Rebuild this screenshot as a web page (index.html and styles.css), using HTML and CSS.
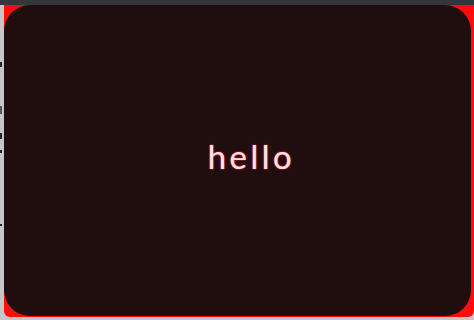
FILE: index.html
```html
<!DOCTYPE html>
<html>
<head>
<meta charset="utf-8">
<link rel="stylesheet" href="styles.css">
</head>
<body>
<div class="topbar"></div>
<div class="main">
  <div class="side">
    <i class="mark m1"></i>
    <i class="mark m2"></i>
    <i class="mark m3"></i>
    <i class="mark m4"></i>
    <i class="mark m5"></i>
  </div>
  <div class="frame">
    <div class="card">
      <span class="hello">hello</span>
    </div>
  </div>
</div>
</body>
</html>
```
FILE: styles.css
```css
html, body {
  margin: 0;
  padding: 0;
  width: 474px;
  height: 320px;
  overflow: hidden;
  background: #c6c6c8;
}
.topbar {
  height: 5px;
  background: #34363b;
}
.main {
  display: flex;
  height: 312px;
}
.side {
  width: 4px;
  position: relative;
  background: #c6c6c8;
}
.mark {
  position: absolute;
  left: 0;
  width: 2px;
  background: #222;
}
.m1 { top: 57px; height: 5px; }
.m2 { top: 101px; height: 8px; background: #555; }
.m3 { top: 128px; height: 6px; }
.m4 { top: 145px; height: 3px; }
.m5 { top: 219px; height: 2px; }
.frame {
  flex: 1;
  background: #ff0d0d;
  border-bottom-left-radius: 6px;
  border-bottom-right-radius: 6px;
  display: flex;
}
.card {
  flex: 1;
  margin: 0 3px 1px 0;
  background: #200e0e;
  border-radius: 26px;
  display: flex;
  align-items: center;
  justify-content: center;
  padding-left: 28px;
}
.hello {
  font-family: "Lato", sans-serif;
  font-size: 33px;
  letter-spacing: 3.5px;
  color: #ffe0e6;
  text-shadow: 0 0 2px #ff2a40, 0 0 1px #ff2a40;
  margin-top: -10px;
}
```
